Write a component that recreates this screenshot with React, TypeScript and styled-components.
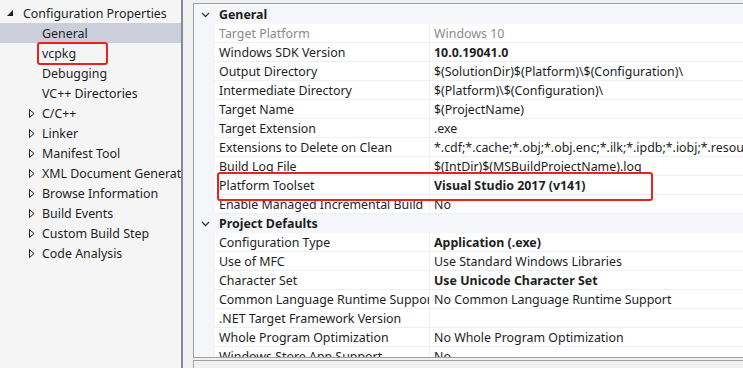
import styled, { createGlobalStyle } from 'styled-components'

const GlobalStyle = createGlobalStyle`
    html, body {
        margin: 0;
        padding: 0;
        background: #f0f0f0;
    }
    body {
        font-family: "Noto Sans", "Open Sans", sans-serif;
        font-size: 12.4px;
        color: #1b1b1b;
    }
`

const TEXT = '#1e1e1e'
const HEADER_BG = '#f4f6fa'
const LINE = '#eeeff2'
const RED = '#e8231f'

type Prop = { name: string, value: string, bold?: boolean, dim?: boolean }
type Section = { title: string, props: Prop[] }

const treeItems: { label: string, expandable?: boolean, selected?: boolean }[] = [
    { label: 'General', selected: true },
    { label: 'vcpkg' },
    { label: 'Debugging' },
    { label: 'VC++ Directories' },
    { label: 'C/C++', expandable: true },
    { label: 'Linker', expandable: true },
    { label: 'Manifest Tool', expandable: true },
    { label: 'XML Document Generator', expandable: true },
    { label: 'Browse Information', expandable: true },
    { label: 'Build Events', expandable: true },
    { label: 'Custom Build Step', expandable: true },
    { label: 'Code Analysis', expandable: true },
]

const sections: Section[] = [
    {
        title: 'General',
        props: [
            { name: 'Target Platform', value: 'Windows 10', dim: true },
            { name: 'Windows SDK Version', value: '10.0.19041.0', bold: true },
            { name: 'Output Directory', value: '$(SolutionDir)$(Platform)\\$(Configuration)\\' },
            { name: 'Intermediate Directory', value: '$(Platform)\\$(Configuration)\\' },
            { name: 'Target Name', value: '$(ProjectName)' },
            { name: 'Target Extension', value: '.exe' },
            { name: 'Extensions to Delete on Clean', value: '*.cdf;*.cache;*.obj;*.obj.enc;*.ilk;*.ipdb;*.iobj;*.resources;*.tlb;*.tli;*.tlh;*.tmp' },
            { name: 'Build Log File', value: '$(IntDir)$(MSBuildProjectName).log' },
            { name: 'Platform Toolset', value: 'Visual Studio 2017 (v141)', bold: true },
            { name: 'Enable Managed Incremental Build', value: 'No' },
        ],
    },
    {
        title: 'Project Defaults',
        props: [
            { name: 'Configuration Type', value: 'Application (.exe)', bold: true },
            { name: 'Use of MFC', value: 'Use Standard Windows Libraries' },
            { name: 'Character Set', value: 'Use Unicode Character Set', bold: true },
            { name: 'Common Language Runtime Support', value: 'No Common Language Runtime Support' },
            { name: '.NET Target Framework Version', value: '' },
            { name: 'Whole Program Optimization', value: 'No Whole Program Optimization' },
            { name: 'Windows Store App Support', value: 'No' },
        ],
    },
]

const Page = styled.div`
    position: relative;
    display: flex;
    height: 368px;
    width: 743px;
    overflow: hidden;
    background: #f0f0f0;
`

const TreePanel = styled.div`
    width: 181px;
    flex-shrink: 0;
    background: #f5f5f5;
    border-right: 2px solid #868a92;
    padding-top: 3px;
`

const TreeRow = styled.div<{ $indent: number, $selected?: boolean }>`
    display: flex;
    align-items: center;
    height: 20px;
    padding-left: ${p => p.$indent}px;
    background: ${p => p.$selected ? '#cccedb' : 'transparent'};
    color: ${TEXT};
    white-space: nowrap;
    overflow: hidden;
`

const Arrow = styled.span<{ $width?: number }>`
    display: inline-flex;
    width: ${p => p.$width ?? 13}px;
    justify-content: flex-start;
    align-items: center;
    flex-shrink: 0;
`

const Mark = styled.div<{ $left: number, $top: number, $width: number, $height: number }>`
    position: absolute;
    left: ${p => p.$left}px;
    top: ${p => p.$top}px;
    width: ${p => p.$width}px;
    height: ${p => p.$height}px;
    box-sizing: border-box;
    border: 2px solid ${RED};
    border-radius: 3px;
    pointer-events: none;
`

const RightColumn = styled.div`
    flex: 1;
    display: flex;
    flex-direction: column;
    margin-left: 10px;
    padding-top: 3px;
    min-width: 0;
`

const GridPanel = styled.div`
    height: 355px;
    box-sizing: border-box;
    padding-top: 1px;
    border: 1px solid #a0a0a0;
    border-right: none;
    background: ${HEADER_BG};
    overflow: hidden;
`

const DescPanel = styled.div`
    margin-top: 2px;
    flex: 1;
    border: 1px solid #a0a0a0;
    border-bottom: none;
    border-right: none;
    background: #f0f0f0;
`

const Row = styled.div`
    display: grid;
    grid-template-columns: 21px 215px 1fr;
    height: 19px;
`

const HeaderRow = styled(Row)`
    background: ${HEADER_BG};
`

const Gutter = styled.div`
    background: ${HEADER_BG};
    display: flex;
    align-items: center;
    justify-content: center;
    padding-left: 2px;
`

const HeaderTitle = styled.div`
    grid-column: 2 / span 2;
    display: flex;
    align-items: center;
    padding-left: 4px;
    font-weight: 700;
    color: ${TEXT};
`

const Cell = styled.div<{ $bold?: boolean, $dim?: boolean, $divider?: boolean }>`
    display: flex;
    align-items: center;
    padding-left: 4px;
    background: #ffffff;
    border-bottom: 1px solid ${LINE};
    border-right: ${p => p.$divider ? `1px solid ${LINE}` : 'none'};
    font-weight: ${p => p.$bold ? 700 : 400};
    color: ${p => p.$dim ? '#8a8a8a' : TEXT};
    white-space: nowrap;
    overflow: hidden;
`

const Expanded = () => (
    <svg width="8" height="8" viewBox="0 0 8 8">
        <path d="M7 1 L7 7 L1 7 Z" fill="#1e1e1e" />
    </svg>
)

const Collapsed = () => (
    <svg width="6" height="9" viewBox="0 0 6 9">
        <path d="M0.5 0.5 L5 4.5 L0.5 8.5 Z" fill="none" stroke="#1e1e1e" strokeWidth="1" />
    </svg>
)

const Chevron = () => (
    <svg width="9" height="6" viewBox="0 0 9 6">
        <path d="M1 1 L4.5 4.5 L8 1" fill="none" stroke="#3a3a3a" strokeWidth="1.3" />
    </svg>
)

const App = () => {
    return (
        <Page>
            <GlobalStyle />
            <TreePanel>
                <TreeRow $indent={6}>
                    <Arrow $width={17}><Expanded /></Arrow>
                    <span>Configuration Properties</span>
                </TreeRow>
                {treeItems.map(item => (
                    <TreeRow key={item.label} $indent={29} $selected={item.selected}>
                        <Arrow>{item.expandable && <Collapsed />}</Arrow>
                        <span>{item.label}</span>
                    </TreeRow>
                ))}
            </TreePanel>
            <RightColumn>
                <GridPanel>
                    {sections.map(section => (
                        <div key={section.title}>
                            <HeaderRow>
                                <Gutter><Chevron /></Gutter>
                                <HeaderTitle>{section.title}</HeaderTitle>
                            </HeaderRow>
                            {section.props.map(p => (
                                <Row key={p.name}>
                                    <Gutter />
                                    <Cell $divider $dim={p.dim}>{p.name}</Cell>
                                    <Cell $bold={p.bold} $dim={p.dim}>{p.value}</Cell>
                                </Row>
                            ))}
                        </div>
                    ))}
                </GridPanel>
                <DescPanel />
            </RightColumn>
            <Mark $left={37} $top={42} $width={71} $height={23} />
            <Mark $left={217} $top={172} $width={436} $height={29} />
        </Page>
    )
}

export default App
